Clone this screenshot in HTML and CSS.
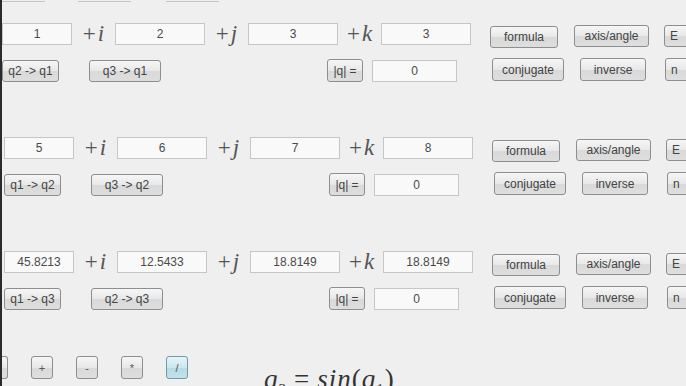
FILE: index.html
```html
<!DOCTYPE html>
<html lang="en">
<head>
  <meta charset="UTF-8" />
  <title>Quaternion Calculator</title>
  <link rel="stylesheet" href="styles.css">
</head>
<body>
  <div class="page">
    <div class="stub">
      <span class="stub-a"></span>
      <span class="stub-b"></span>
      <span class="stub-c"></span>
    </div>

    <!-- q1 -->
    <div class="quat">
      <div class="line">
        <input class="val first" type="text" value="1" />
        <span class="op">+<i>i</i></span>
        <input class="val" type="text" value="2" />
        <span class="op">+<i>j</i></span>
        <input class="val" type="text" value="3" />
        <span class="op">+<i>k</i></span>
        <input class="val" type="text" value="3" />
        <button class="btn formula">formula</button>
        <button class="btn axis">axis/angle</button>
        <button class="btn edge">E</button>
      </div>
      <div class="line lower">
        <button class="btn copy first">q2 -&gt; q1</button>
        <button class="btn copy second">q3 -&gt; q1</button>
        <button class="btn norm">|q| =</button>
        <input class="val small" type="text" value="0" />
        <button class="btn conj">conjugate</button>
        <button class="btn inv">inverse</button>
        <button class="btn edge">n</button>
      </div>
    </div>

    <!-- q2 -->
    <div class="quat shift">
      <div class="line">
        <input class="val first" type="text" value="5" />
        <span class="op">+<i>i</i></span>
        <input class="val" type="text" value="6" />
        <span class="op">+<i>j</i></span>
        <input class="val" type="text" value="7" />
        <span class="op">+<i>k</i></span>
        <input class="val" type="text" value="8" />
        <button class="btn formula">formula</button>
        <button class="btn axis">axis/angle</button>
        <button class="btn edge">E</button>
      </div>
      <div class="line lower">
        <button class="btn copy first">q1 -&gt; q2</button>
        <button class="btn copy second">q3 -&gt; q2</button>
        <button class="btn norm">|q| =</button>
        <input class="val small" type="text" value="0" />
        <button class="btn conj">conjugate</button>
        <button class="btn inv">inverse</button>
        <button class="btn edge">n</button>
      </div>
    </div>

    <!-- q3 -->
    <div class="quat shift">
      <div class="line">
        <input class="val first" type="text" value="45.8213" />
        <span class="op">+<i>i</i></span>
        <input class="val" type="text" value="12.5433" />
        <span class="op">+<i>j</i></span>
        <input class="val" type="text" value="18.8149" />
        <span class="op">+<i>k</i></span>
        <input class="val" type="text" value="18.8149" />
        <button class="btn formula">formula</button>
        <button class="btn axis">axis/angle</button>
        <button class="btn edge">E</button>
      </div>
      <div class="line lower">
        <button class="btn copy first">q1 -&gt; q3</button>
        <button class="btn copy second">q2 -&gt; q3</button>
        <button class="btn norm">|q| =</button>
        <input class="val small" type="text" value="0" />
        <button class="btn conj">conjugate</button>
        <button class="btn inv">inverse</button>
        <button class="btn edge">n</button>
      </div>
    </div>

    <div class="ops">
      <button class="btn key cut"></button>
      <button class="btn key">+</button>
      <button class="btn key">-</button>
      <button class="btn key">*</button>
      <button class="btn key active">/</button>
      <div class="result"><i>q</i><sub>3</sub><span class="eq">=</span><i>sin</i>(<i>q</i><sub>1</sub>)</div>
    </div>
  </div>
</body>
</html>
```

FILE: styles.css
```css
html, body {
  margin: 0;
  height: 100%;
  overflow: hidden;
  background: #efefef;
}
body {
  font-family: 'Liberation Sans', Arial, sans-serif;
  color: #333;
}
.page {
  height: 100%;
  border-left: 2px solid #2a2a2a;
  box-sizing: border-box;
}
.stub {
  display: flex;
  height: 2px;
}
.stub span {
  display: block;
  height: 1px;
  border-bottom: 1px solid #c4c4c4;
}
.stub-a { width: 43px; }
.stub-b { width: 53px; margin-left: 33px; }
.stub-c { width: 53px; margin-left: 35px; }

.quat {
  padding-top: 21px;
  height: 93px;
}
.shift {
  padding-left: 2px;
}
.line {
  display: flex;
  align-items: flex-start;
  height: 22px;
}
.line > * {
  flex-shrink: 0;
}
.lower {
  margin-top: 14px;
}

.val {
  box-sizing: border-box;
  width: 90px;
  height: 22px;
  margin: 0;
  padding: 0 4px;
  border: 1px solid #c6c6c6;
  background: #f9f9f9;
  font-family: 'Liberation Sans', Arial, sans-serif;
  font-size: 12px;
  color: #4a4a4a;
  text-align: center;
}
.val.first {
  width: 70px;
}
.val.small {
  width: 85px;
  margin-left: 9px;
  margin-top: 1px;
}
.op {
  width: 43px;
  text-align: center;
  font-family: 'Liberation Serif', 'Times New Roman', serif;
  font-size: 23px;
  line-height: 22px;
  color: #555;
}
.op i {
  margin-left: 2px;
}

.btn {
  box-sizing: border-box;
  height: 22px;
  margin: 0;
  padding: 0;
  border: 1px solid #8e8e8e;
  border-radius: 3px;
  background: linear-gradient(#f6f6f6, #e8e8e8 50%, #d9d9d9 51%, #dedede);
  font-family: 'Liberation Sans', Arial, sans-serif;
  font-size: 12px;
  color: #444;
  cursor: pointer;
}
.formula {
  width: 68px;
  margin-left: 19px;
  margin-top: 3px;
}
.axis {
  width: 75px;
  margin-left: 16px;
  margin-top: 2px;
}
.edge {
  width: 40px;
  margin-left: 15px;
  margin-top: 2px;
  text-align: left;
  padding-left: 5px;
}
.copy.first {
  width: 57px;
  margin-top: 1px;
}
.copy.second {
  width: 72px;
  margin-left: 30px;
  margin-top: 1px;
}
.norm {
  width: 36px;
  margin-left: 166px;
  height: 23px;
}
.conj {
  width: 72px;
  margin-left: 35px;
  margin-top: -1px;
  height: 23px;
}
.inv {
  width: 66px;
  margin-left: 16px;
  margin-top: -1px;
  height: 23px;
}
.lower .edge {
  margin-left: 19px;
  margin-top: -1px;
  height: 23px;
}

.ops {
  display: flex;
  align-items: flex-start;
  padding-top: 12px;
}
.ops > * {
  flex-shrink: 0;
}
.key {
  width: 22px;
  height: 23px;
  margin-left: 23px;
  font-size: 11px;
  color: #555;
}
.key.cut {
  width: 6px;
  margin-left: 0;
  border-left: none;
  border-radius: 0 3px 3px 0;
}
.key.active {
  border-color: #6f9aa8;
  background: linear-gradient(#e6f4f8, #cbe7ef 50%, #b4dbe6 51%, #c2e2ea);
}
.result {
  margin-left: 76px;
  margin-top: 9px;
  font-family: 'Liberation Serif', 'Times New Roman', serif;
  font-size: 27px;
  line-height: 28px;
  color: #333;
  white-space: nowrap;
  letter-spacing: 1px;
}
.result sub {
  font-size: 15px;
  font-style: normal;
}
.eq {
  margin: 0 7px;
}
```
